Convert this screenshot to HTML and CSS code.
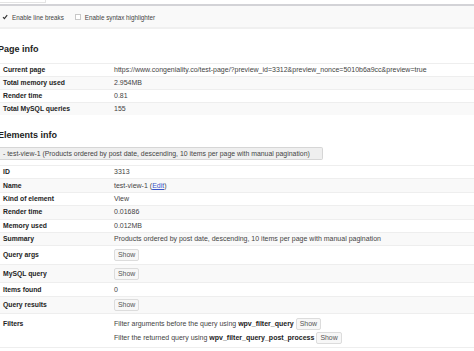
FILE: index.html
```html
<!DOCTYPE html>
<html>
<head>
<meta charset="utf-8">
<link rel="stylesheet" href="styles.css">
</head>
<body>
<div class="topstrip"><span class="stub"></span></div>
<div class="optbar">
  <label class="opt"><span class="cb checked"><svg viewBox="0 0 6 6" width="6" height="6"><path d="M1 3.2 L2.4 4.6 L5.2 1.2" fill="none" stroke="#333" stroke-width="1.2"/></svg></span>Enable line breaks</label>
  <label class="opt opt2"><span class="cb"></span>Enable syntax highlighter</label>
</div>

<h2 class="heading first">Page info</h2>
<table class="info">
  <tr><td class="k">Current page</td><td class="v">https://www.congeniality.co/test-page/?preview_id=3312&amp;preview_nonce=5010b6a9cc&amp;preview=true</td></tr>
  <tr><td class="k">Total memory used</td><td class="v">2.954MB</td></tr>
  <tr><td class="k">Render time</td><td class="v">0.81</td></tr>
  <tr><td class="k">Total MySQL queries</td><td class="v">155</td></tr>
</table>

<h2 class="heading second">Elements info</h2>
<button class="elbtn">- test-view-1 (Products ordered by post date, descending, 10 items per page with manual pagination)</button>
<table class="info elements">
  <tr><td class="k">ID</td><td class="v">3313</td></tr>
  <tr><td class="k">Name</td><td class="v">test-view-1 (<a href="#" class="edit">Edit</a>)</td></tr>
  <tr><td class="k">Kind of element</td><td class="v">View</td></tr>
  <tr><td class="k">Render time</td><td class="v">0.01686</td></tr>
  <tr><td class="k">Memory used</td><td class="v">0.012MB</td></tr>
  <tr><td class="k">Summary</td><td class="v">Products ordered by post date, descending, 10 items per page with manual pagination</td></tr>
  <tr class="r-args"><td class="k">Query args</td><td class="v"><button class="show">Show</button></td></tr>
  <tr class="r-sql"><td class="k">MySQL query</td><td class="v"><button class="show">Show</button></td></tr>
  <tr class="r-items"><td class="k">Items found</td><td class="v">0</td></tr>
  <tr class="r-results"><td class="k">Query results</td><td class="v"><button class="show">Show</button></td></tr>
  <tr class="filters"><td class="k">Filters</td><td class="v">
    <div class="fline">Filter arguments before the query using <b>wpv_filter_query</b> <button class="show">Show</button></div>
    <div class="fline">Filter the returned query using <b>wpv_filter_query_post_process</b> <button class="show">Show</button></div>
  </td></tr>
</table>
</body>
</html>
```

FILE: styles.css
```css
html, body {
  margin: 0;
  padding: 0;
  background: #ffffff;
}
body {
  font-family: "Liberation Sans", Arial, sans-serif;
  font-size: 7px;
  color: #444444;
  width: 474px;
  overflow: hidden;
}
.topstrip {
  height: 4px;
  border-bottom: 2px solid #d3d3d7;
}
.stub {
  display: block;
  width: 46px;
  height: 3px;
  border-right: 1px solid #e4e4e4;
  border-bottom: 1px solid #e4e4e4;
  box-sizing: border-box;
}
.optbar {
  height: 20px;
  background: #f9f9f9;
  border-bottom: 2px solid #f0f0f0;
  display: flex;
  align-items: center;
  padding-left: 2px;
  padding-top: 1px;
}
.opt {
  display: flex;
  align-items: center;
  font-size: 6.3px;
  color: #444;
}
.opt2 {
  margin-left: 11px;
}
.cb {
  width: 6px;
  height: 6px;
  box-sizing: border-box;
  border: 1px solid #c8c8c8;
  background: #fff;
  margin-right: 4px;
  display: inline-flex;
}
.cb.checked {
  border: none;
  background: transparent;
}
.cb svg {
  display: block;
}
.heading {
  font-size: 9px;
  font-weight: bold;
  color: #222;
  line-height: 10px;
  margin: 0;
  text-indent: -2px;
}
.heading.first {
  margin-top: 15px;
  margin-bottom: 8.5px;
}
.heading.second {
  margin-top: 15px;
  margin-bottom: 7px;
}
.info {
  width: 474px;
  border-collapse: collapse;
  border-spacing: 0;
}
.info tr {
  height: 13px;
  border-top: 1px solid #eeeeee;
}
.info.elements tr {
  height: 13.4px;
}
.info tr:nth-child(even) {
  background: #f9f9f9;
}
.info td {
  padding: 0 3px;
  line-height: 8px;
  vertical-align: middle;
}
.info td.k {
  width: 105px;
  font-weight: bold;
  color: #222;
  font-size: 6.8px;
}
.info td.v {
  color: #444;
  font-size: 7px;
  white-space: nowrap;
}
.info.elements tr:last-child {
  border-bottom: 1px solid #eeeeee;
}
.elbtn {
  display: block;
  margin: 0 0 5px 0;
  height: 13px;
  padding: 0 3px;
  font-family: "Liberation Sans", Arial, sans-serif;
  font-size: 6.9px;
  color: #444;
  background: #efefef;
  border: 1px solid #d6d6d6;
  border-left: none;
  border-radius: 0 2px 2px 0;
  width: 323px;
  text-align: left;
  line-height: 11px;
}
.edit {
  color: #3a55c8;
  text-decoration: underline;
}
.info.elements tr.r-args {
  height: 19px;
}
.info.elements tr.r-sql {
  height: 18px;
}
.info.elements tr.r-items {
  height: 14px;
}
.info.elements tr.r-results {
  height: 16.5px;
}
.show {
  font-family: "Liberation Sans", Arial, sans-serif;
  font-size: 6.9px;
  color: #555;
  background: #f7f7f7;
  border: 1px solid #dcdcdc;
  border-radius: 2px;
  height: 12px;
  padding: 0 3px;
  line-height: 10px;
  vertical-align: middle;
}
.info.elements tr.filters {
  height: 34px;
}
.info tr.filters td {
  vertical-align: top;
  padding-top: 3px;
}
.info tr.filters td.k {
  line-height: 14px;
}
.fline {
  height: 14px;
  display: flex;
  align-items: center;
  white-space: pre;
}
.fline b {
  color: #222;
}
.fline .show {
  margin-left: 2px;
}
```
